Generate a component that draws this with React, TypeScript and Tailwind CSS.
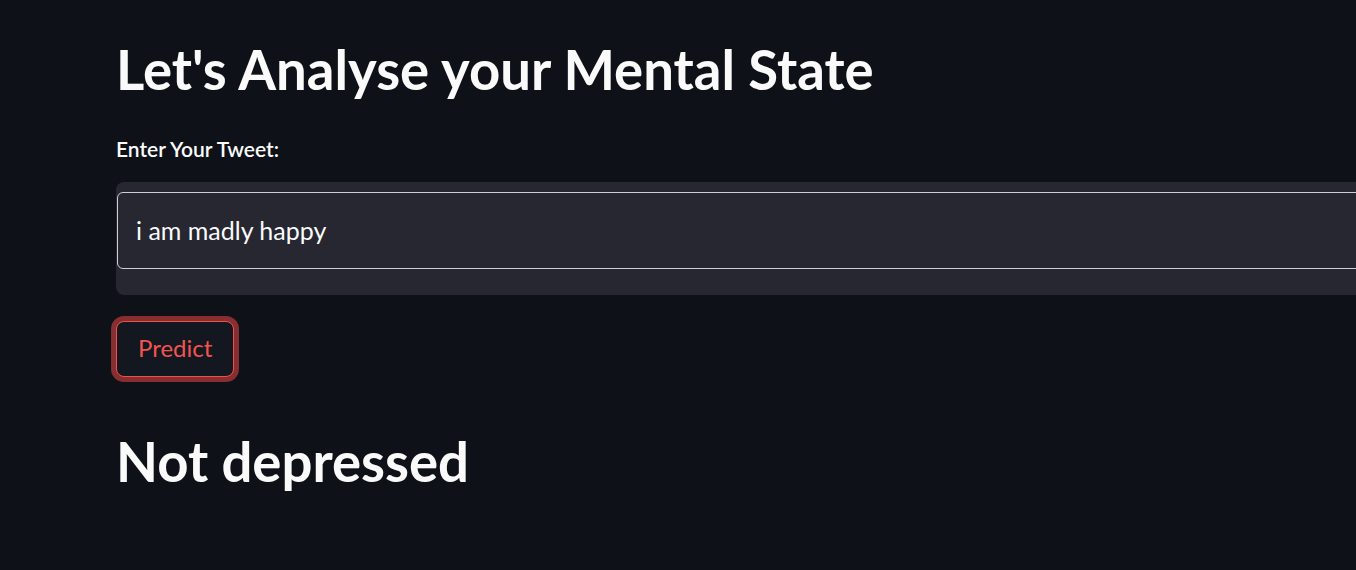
const font = { fontFamily: "Lato, 'Noto Sans', sans-serif" };

export default function App() {
  return (
    <div className="min-h-screen w-full overflow-hidden bg-[#0e1117] text-[#fafafa]" style={font}>
      <main className="flex w-[1400px] flex-col pl-[116px] pt-[37px]">
        <h1 className="text-[54.5px] font-bold leading-[1.2]">Let's Analyse your Mental State</h1>

        <label className="mt-[34px] text-[21px] font-semibold leading-[1.2]">Enter Your Tweet:</label>

        <div className="mt-[20px] rounded-lg bg-[#262730] pb-[26px] pl-px pt-[10px]">
          <div className="flex h-[77px] items-center rounded-md border border-[#cfcfd2] bg-[#262730] pl-[18px]">
            <span className="text-[25px] leading-[1.2]">i am madly happy</span>
          </div>
        </div>

        <div className="mt-[26px]">
          <button
            type="button"
            className="flex h-[56px] items-center rounded-lg border border-[#f0504c] bg-[#131720] px-[21px] text-[24px] leading-[1.2] text-[#f25450] shadow-[0_0_0_5px_rgba(255,75,75,0.5)]"
          >
            Predict
          </button>
        </div>

        <h1 className="mt-[52px] text-[54.5px] font-bold leading-[1.2]">Not depressed</h1>
      </main>
    </div>
  );
}
